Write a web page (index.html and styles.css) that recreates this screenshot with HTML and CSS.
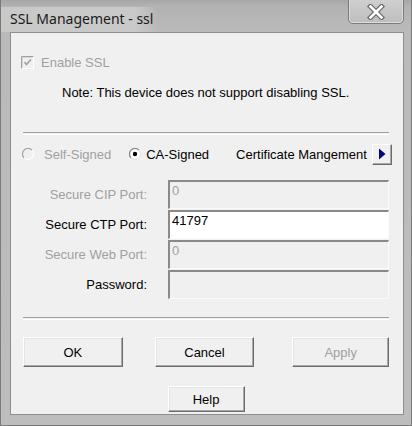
FILE: index.html
```html
<!DOCTYPE html>
<html>
<head>
<meta charset="utf-8">
<link rel="stylesheet" href="styles.css">
</head>
<body>
<div class="window">
  <div class="titlebar">
    <span class="title">SSL Management - ssl</span>
    <div class="close">
      <svg width="22" height="16" viewBox="0 0 22 16">
        <path d="M5.5 2.5 L16.5 13.5 M16.5 2.5 L5.5 13.5" stroke="#6a6a6a" stroke-width="5" stroke-linecap="square" fill="none"/>
        <path d="M5.5 2.5 L16.5 13.5 M16.5 2.5 L5.5 13.5" stroke="#ffffff" stroke-width="2.6" stroke-linecap="square" fill="none"/>
      </svg>
    </div>
  </div>
  <div class="client">
    <div class="row check-row">
      <svg class="checkbox" width="13" height="13" viewBox="0 0 13 13">
        <rect x="0" y="0" width="13" height="13" fill="#ffffff"/>
        <path d="M0.5 12.5 V0.5 H12.5" stroke="#a0a0a0" fill="none"/>
        <path d="M1.5 11.5 V1.5 H11.5" stroke="#d6d6d6" fill="none"/>
        <rect x="2" y="2" width="10" height="10" fill="#f0f0f0"/>
        <path d="M3.5 6 L5.5 8.5 L10 3.5" stroke="#a0a0a0" stroke-width="1.6" fill="none"/>
      </svg>
      <span class="disabled">Enable SSL</span>
    </div>
    <div class="row note-row">Note: This device does not support disabling SSL.</div>
    <div class="sep sep1"></div>
    <div class="row radio-row">
      <span class="radio-item">
        <svg class="radio" width="12" height="12" viewBox="0 0 12 12">
          <circle cx="6" cy="6" r="5.5" fill="#f0f0f0"/>
          <path d="M2.1 9.9 A5.5 5.5 0 0 1 9.9 2.1" stroke="#a0a0a0" stroke-width="1.2" fill="none"/>
          <path d="M9.9 2.1 A5.5 5.5 0 0 1 2.1 9.9" stroke="#ffffff" stroke-width="1.2" fill="none"/>
        </svg>
        <span class="disabled">Self-Signed</span>
      </span>
      <span class="radio-item ca">
        <svg class="radio" width="12" height="12" viewBox="0 0 12 12">
          <circle cx="6" cy="6" r="5.5" fill="#ffffff"/>
          <path d="M2.1 9.9 A5.5 5.5 0 0 1 9.9 2.1" stroke="#808080" stroke-width="1.2" fill="none"/>
          <path d="M9.9 2.1 A5.5 5.5 0 0 1 2.1 9.9" stroke="#e3e3e3" stroke-width="1.2" fill="none"/>
          <circle cx="6" cy="6" r="2.2" fill="#000000"/>
        </svg>
        <span>CA-Signed</span>
      </span>
      <span class="cert">Certificate Mangement</span>
      <span class="arrow-btn">
        <svg width="8" height="12" viewBox="0 0 8 12"><path d="M1 0.5 L7.5 6 L1 11.5 Z" fill="#000080"/></svg>
      </span>
    </div>
    <div class="form">
      <span class="label disabled">Secure CIP Port:</span>
      <div class="field">0</div>
      <span class="label">Secure CTP Port:</span>
      <div class="field active">41797</div>
      <span class="label disabled">Secure Web Port:</span>
      <div class="field">0</div>
      <span class="label">Password:</span>
      <div class="field"></div>
    </div>
    <div class="sep sep2"></div>
    <div class="buttons">
      <div class="btn ok">OK</div>
      <div class="btn cancel">Cancel</div>
      <div class="btn apply disabled">Apply</div>
    </div>
    <div class="help-row">
      <div class="btn help">Help</div>
    </div>
  </div>
</div>
</body>
</html>
```

FILE: styles.css
```css
html, body {
  margin: 0;
  padding: 0;
  background: #b8b8b8;
}
.window {
  width: 412px;
  height: 426px;
  box-sizing: border-box;
  display: flex;
  flex-direction: column;
  background: linear-gradient(#a6a6a6 0, #b2b2b2 6px, #bababa 30px, #bdbdbd 100%);
  border-left: 1px solid #7a7a7a;
  border-right: 1px solid #7a7a7a;
  border-bottom: 1px solid #7a7a7a;
  font-family: "Liberation Sans", Arial, sans-serif;
  font-size: 13px;
  color: #000;
}
.titlebar {
  height: 32px;
  flex: none;
  display: flex;
  justify-content: space-between;
  align-items: flex-end;
}
.title {
  font-family: "Noto Sans", "Open Sans", sans-serif;
  font-size: 14px;
  color: #1a1a1a;
  height: 25px;
  line-height: 23px;
  padding: 0 5px 0 9px;
  background: linear-gradient(90deg, #c9c9c9 0, #c9c9c9 85%, rgba(201,201,201,0) 100%);
}
.close {
  align-self: flex-start;
  width: 54px;
  height: 23px;
  margin-right: 7px;
  border: 1px solid #7b7b7b;
  border-top: none;
  border-radius: 0 0 5px 5px;
  background: linear-gradient(#cfcfcf, #bdbdbd);
  box-shadow: inset 0 -1px 0 #dedede, inset 1px 0 0 #dadada, inset -1px 0 0 #dadada;
  display: flex;
  align-items: center;
  justify-content: center;
}
.client {
  flex: 1;
  margin: 0 7px 10px 9px;
  background: #f0f0f0;
  border: 1px solid #8e8e8e;
  padding: 0 14px 0 12px;
  display: flex;
  flex-direction: column;
}
.disabled {
  color: #a0a0a0;
}
.row {
  display: flex;
  align-items: center;
  white-space: nowrap;
}
.check-row {
  height: 20px;
  margin-top: 19px;
  margin-left: -2px;
}
.checkbox {
  margin-right: 7px;
}
.note-row {
  height: 20px;
  margin-top: 10px;
  padding-left: 39px;
}
.sep {
  height: 1px;
  border-top: 1px solid #a0a0a0;
  border-bottom: 1px solid #ffffff;
  flex: none;
}
.sep1 {
  margin-top: 30px;
}
.radio-row {
  height: 22px;
  margin-top: 8px;
}
.radio-row > * {
  flex: none;
}
.radio-item {
  display: flex;
  align-items: center;
}
.radio {
  margin-left: -1px;
  margin-right: 10px;
}
.radio-item.ca {
  margin-left: 19px;
}
.radio-item.ca .radio {
  margin-right: 5px;
}
.cert {
  margin-left: 27px;
}
.arrow-btn {
  margin-left: 5px;
  width: 18px;
  height: 19px;
  border: 1px solid;
  border-color: #ffffff #6c6c6c #6c6c6c #ffffff;
  box-shadow: inset -1px -1px 0 #a8a8a8;
  display: flex;
  align-items: center;
  justify-content: center;
}
.form {
  margin-top: 15px;
  display: grid;
  grid-template-columns: 124px 1fr;
  column-gap: 21px;
  row-gap: 1px;
}
.label {
  text-align: right;
  height: 29px;
  line-height: 30px;
  white-space: nowrap;
}
.field {
  height: 29px;
  box-sizing: border-box;
  border-style: solid;
  border-width: 2px 1px 1px 2px;
  border-color: #8a8a8a #fafafa #fafafa #8a8a8a;
  background: #f0f0f0;
  color: #a0a0a0;
  padding: 1px 0 0 2px;
  line-height: 16px;
}
.field.active {
  background: #ffffff;
  color: #000;
}
.sep2 {
  margin-top: 18px;
}
.buttons {
  margin-top: 17px;
  display: flex;
}
.btn {
  height: 30px;
  box-sizing: border-box;
  border: 1px solid;
  border-color: #ffffff #6c6c6c #6c6c6c #ffffff;
  box-shadow: inset -1px -1px 0 #a8a8a8, inset 1px 1px 0 #e4e4e4;
  background: #f0f0f0;
  display: flex;
  align-items: center;
  justify-content: center;
}
.ok {
  width: 100px;
}
.cancel {
  width: 100px;
  margin-left: 32px;
}
.apply {
  width: 97px;
  margin-left: 38px;
}
.help-row {
  margin-top: 19px;
  display: flex;
  justify-content: center;
}
.help {
  width: 77px;
  height: 26px;
}
```
